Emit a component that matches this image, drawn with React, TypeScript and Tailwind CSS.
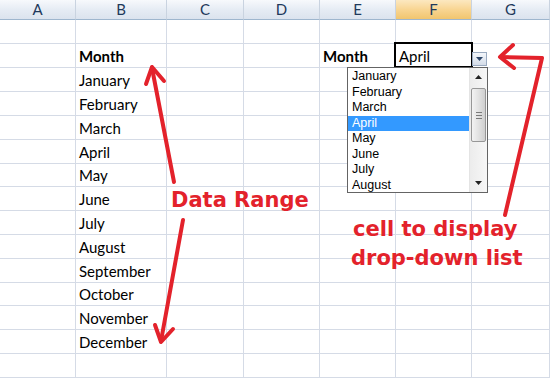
import React from "react";

const cols = ["A", "B", "C", "D", "E", "F", "G"];
const months = [
  "January", "February", "March", "April", "May", "June",
  "July", "August", "September", "October", "November", "December",
];
const listItems = ["January", "February", "March", "April", "May", "June", "July", "August"];

function cellContent(row: number, col: number): { text: string; bold?: boolean } | null {
  if (row === 1 && col === 1) return { text: "Month", bold: true };
  if (row === 1 && col === 4) return { text: "Month", bold: true };
  if (row === 1 && col === 5) return { text: "April" };
  if (col === 1 && row >= 2 && row <= 13) return { text: months[row - 2] };
  return null;
}

export default function App() {
  const rows = Array.from({ length: 15 }, (_, i) => i);
  return (
    <div
      className="relative w-[550px] h-[378px] overflow-hidden bg-white"
      style={{ fontFamily: "Lato, 'Open Sans', sans-serif" }}
    >
      {/* column headers */}
      <div className="grid grid-cols-[76px_91px_77px_76px_76px_76px_1fr] h-[20px]">
        {cols.map((c) => (
          <div
            key={c}
            className={
              c === "F"
                ? "flex items-center justify-center border-r border-b border-r-[#c9d3e0] border-b-[#9eb6ce] bg-linear-to-b from-[#fce8c0] via-[#f8d592] to-[#f1c56e] text-[#1e395b] text-[15px] leading-none"
                : "flex items-center justify-center border-r border-b border-r-[#c9d3e0] border-b-[#9eb6ce] bg-linear-to-b from-[#f7f9fc] via-[#e6ecf4] to-[#dbe3ee] text-[#1e395b] text-[15px] leading-none"
            }
          >
            {c}
          </div>
        ))}
      </div>

      {/* cells */}
      <div className="flex flex-col">
        {rows.map((r) => (
          <div
            key={r}
            className={
              r === 6 || r === 11
                ? "grid grid-cols-[76px_91px_77px_76px_76px_76px_1fr] h-[23px]"
                : "grid grid-cols-[76px_91px_77px_76px_76px_76px_1fr] h-[24px]"
            }
          >
            {cols.map((c, ci) => {
              const content = cellContent(r, ci);
              return (
                <div
                  key={`${r}-${c}`}
                  className="border-r border-b border-[#d5dbe6] flex items-end pl-[3px] pb-[2px] text-[15px] leading-[18px] text-black whitespace-nowrap overflow-visible"
                >
                  {content ? (
                    <span className={content.bold ? "font-bold" : ""}>{content.text}</span>
                  ) : null}
                </div>
              );
            })}
          </div>
        ))}
      </div>

      {/* selection border on F2 */}
      <div className="absolute left-[394px] top-[42px] w-[79px] h-[26px] border-2 border-black pointer-events-none" />

      {/* dropdown button */}
      <div className="absolute left-[472px] top-[52px] w-[15px] h-[14px] border border-[#9aaac0] bg-linear-to-b from-[#f4f7fb] to-[#d4dce8] flex items-center justify-center">
        <svg width="7" height="4" viewBox="0 0 7 4">
          <path d="M0 0 L7 0 L3.5 4 Z" fill="#2d4669" />
        </svg>
      </div>

      {/* dropdown list */}
      <div
        className="absolute left-[347px] top-[67px] w-[141px] h-[126px] border border-[#646464] bg-white flex"
        style={{ fontFamily: "'Liberation Sans', Arial, sans-serif" }}
      >
        <div className="flex-1 flex flex-col pt-[1px]">
          {listItems.map((m) => (
            <div
              key={m}
              className={
                m === "April"
                  ? "h-[15.5px] leading-[15.5px] pl-[4px] text-[12.5px] bg-[#3399ff] text-white"
                  : "h-[15.5px] leading-[15.5px] pl-[4px] text-[12.5px] text-black"
              }
            >
              {m}
            </div>
          ))}
        </div>
        {/* scrollbar */}
        <div className="w-[18px] flex flex-col bg-linear-to-r from-[#ececec] to-[#f7f7f7] border-l border-[#e4e4e4]">
          <div className="h-[18px] flex items-center justify-center">
            <svg width="7" height="4" viewBox="0 0 7 4">
              <path d="M0 4 L7 4 L3.5 0 Z" fill="#222" />
            </svg>
          </div>
          <div className="mx-[1px] mt-[2px] h-[54px] rounded-[2px] border border-[#979797] bg-linear-to-r from-[#f3f3f3] via-[#e2e2e2] to-[#cfcfcf] flex flex-col items-center justify-center gap-[2px]">
            <div className="w-[6px] h-px bg-[#7a7a7a]" />
            <div className="w-[6px] h-px bg-[#7a7a7a]" />
            <div className="w-[6px] h-px bg-[#7a7a7a]" />
          </div>
          <div className="flex-1" />
          <div className="h-[18px] flex items-center justify-center">
            <svg width="7" height="4" viewBox="0 0 7 4">
              <path d="M0 0 L7 0 L3.5 4 Z" fill="#222" />
            </svg>
          </div>
        </div>
      </div>

      {/* annotations text */}
      <div
        className="absolute left-[171px] top-[187px] text-[21px] font-bold text-[#e3222b] leading-[26px] whitespace-nowrap"
        style={{ fontFamily: "'DejaVu Sans', sans-serif" }}
      >
        Data Range
      </div>
      <div
        className="absolute left-[353px] top-[215px] text-[21px] font-bold text-[#e3222b] leading-[29px] whitespace-nowrap"
        style={{ fontFamily: "'DejaVu Sans', sans-serif" }}
      >
        <div>cell to display</div>
        <div className="-ml-[2px]">drop-down list</div>
      </div>

      {/* arrows */}
      <svg className="absolute left-0 top-0 pointer-events-none" width="550" height="378" viewBox="0 0 550 378">
        <g stroke="#e3222b" strokeWidth="4" strokeLinecap="round" strokeLinejoin="round" fill="none">
          <path d="M174 182 L152 68" />
          <path d="M146 84 L152 67 L164 81" />
          <path d="M183 220 L161 341" />
          <path d="M155 325 L161 342 L173 329" />
          <path d="M505 215 L542 58 L501 57" />
          <path d="M513 45 L500 57 L514 68" />
        </g>
      </svg>
    </div>
  );
}
